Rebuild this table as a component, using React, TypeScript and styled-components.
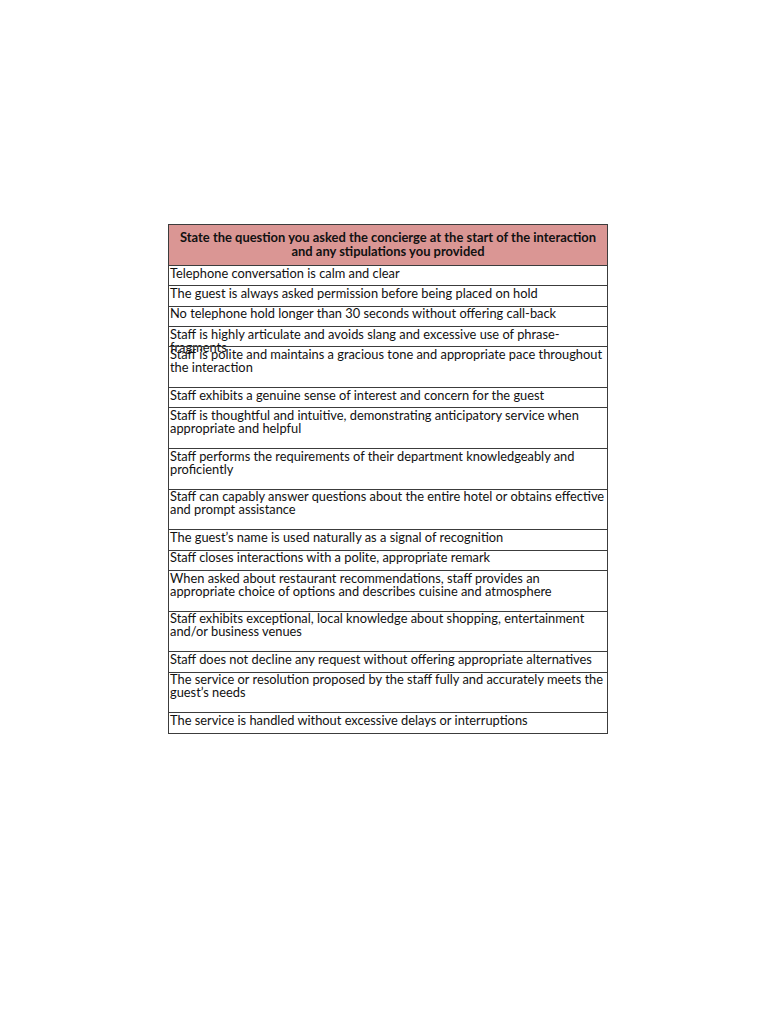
import React from "react";
import styled, { createGlobalStyle } from "styled-components";

const Global = createGlobalStyle`
  html, body { margin: 0; padding: 0; background: #ffffff; }
  body { font-family: Lato, "Open Sans", "Liberation Sans", sans-serif; color: #111; }
`;

const Page = styled.div`
  width: 768px;
  min-height: 1024px;
  padding-top: 224px;
  padding-left: 168px;
  box-sizing: border-box;
  display: flex;
  align-items: flex-start;
  justify-content: flex-start;
`;

const Table = styled.div`
  width: 440px;
  box-sizing: border-box;
  border: 1px solid #3c3c3c;
  display: flex;
  flex-direction: column;
`;

const Header = styled.div`
  height: 40px;
  box-sizing: border-box;
  background: #da9694;
  display: flex;
  flex-direction: column;
  align-items: center;
  justify-content: center;
  font-weight: 700;
  font-size: 12.95px;
  line-height: 14px;
  text-align: center;
  color: #111;
  padding-bottom: 2px;
  white-space: nowrap;
`;

const Row = styled.div<{ $lines: number }>`
  height: ${(p) => (p.$lines === 2 ? 40.67 : 20.33)}px;
  box-sizing: border-box;
  border-top: 1px solid #3c3c3c;
  padding: 0.8px 2px 0 1px;
  font-size: 12.85px;
  line-height: 12.8px;
  color: #111;
  overflow: visible;
  white-space: normal;
`;

const rows: { text: string; lines: number }[] = [
  { text: "Telephone conversation is calm and clear", lines: 1 },
  { text: "The guest is always asked permission before being placed on hold", lines: 1 },
  { text: "No telephone hold longer than 30 seconds without offering call-back", lines: 1 },
  { text: "Staff is highly articulate and avoids slang and excessive use of phrase-fragments", lines: 1 },
  { text: "Staff is polite and maintains a gracious tone and appropriate pace throughout the interaction", lines: 2 },
  { text: "Staff exhibits a genuine sense of interest and concern for the guest", lines: 1 },
  { text: "Staff is thoughtful and intuitive, demonstrating anticipatory service when appropriate and helpful", lines: 2 },
  { text: "Staff performs the requirements of their department knowledgeably and proficiently", lines: 2 },
  { text: "Staff can capably answer questions about the entire hotel or obtains effective and prompt assistance", lines: 2 },
  { text: "The guest\u2019s name is used naturally as a signal of recognition", lines: 1 },
  { text: "Staff closes interactions with a polite, appropriate remark", lines: 1 },
  { text: "When asked about restaurant recommendations, staff provides an appropriate choice of options and describes cuisine and atmosphere", lines: 2 },
  { text: "Staff exhibits exceptional, local knowledge about shopping, entertainment and/or business venues", lines: 2 },
  { text: "Staff does not decline any request without offering appropriate alternatives", lines: 1 },
  { text: "The service or resolution proposed by the staff fully and accurately meets the guest\u2019s needs", lines: 2 },
  { text: "The service is handled without excessive delays or interruptions", lines: 1 },
];

export default function App() {
  return (
    <>
      <Global />
      <Page>
        <Table>
          <Header>
            <span>State the question you asked the concierge at the start of the interaction</span>
            <span>and any stipulations you provided</span>
          </Header>
          {rows.map((r, i) => (
            <Row key={i} $lines={r.lines}>
              {r.text}
            </Row>
          ))}
        </Table>
      </Page>
    </>
  );
}
